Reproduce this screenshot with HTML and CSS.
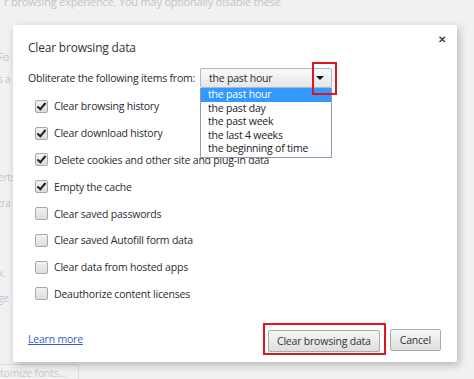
FILE: index.html
```html
<!DOCTYPE html>
<html lang="en">
  <head>
    <meta charset="UTF-8" />
    <title>Clear browsing data</title>
    <link rel="stylesheet" href="styles.css">
  </head>
  <body>
    <div class="page">
      <p class="page-top">r browsing experience. You may optionally disable these</p>
      <div class="page-side">
        <span style="top:52px">Fo</span>
        <span style="top:74px">s a</span>
        <span style="top:172px">erts</span>
        <span style="top:198px">tra</span>
        <span style="top:268px">k.</span>
        <span class="blue" style="top:293px">ge</span>
      </div>
      <div class="page-btn">tomize fonts...</div>
    </div>

    <div class="dialog">
      <div class="dialog-head">
        <h1>Clear browsing data</h1>
        <span class="close">&#x2715;</span>
      </div>

      <div class="period">
        <label>Obliterate the following items from:</label>
        <div class="select">
          <div class="select-box">
            <span>the past hour</span>
            <span class="arrow"></span>
          </div>
          <ul class="options">
            <li class="active">the past hour</li>
            <li>the past day</li>
            <li>the past week</li>
            <li>the last 4 weeks</li>
            <li>the beginning of time</li>
          </ul>
          <div class="mark mark-arrow"></div>
        </div>
      </div>

      <div class="items">
        <div class="item"><span class="check on"></span>Clear browsing history</div>
        <div class="item"><span class="check on"></span>Clear download history</div>
        <div class="item"><span class="check on"></span>Delete cookies and other site and plug-in data</div>
        <div class="item"><span class="check on"></span>Empty the cache</div>
        <div class="item"><span class="check"></span>Clear saved passwords</div>
        <div class="item"><span class="check"></span>Clear saved Autofill form data</div>
        <div class="item"><span class="check"></span>Clear data from hosted apps</div>
        <div class="item"><span class="check"></span>Deauthorize content licenses</div>
      </div>

      <div class="dialog-foot">
        <a href="#">Learn more</a>
        <div class="buttons">
          <div class="mark-wrap"><button>Clear browsing data</button></div>
          <button class="cancel">Cancel</button>
        </div>
      </div>
    </div>
  </body>
</html>
```

FILE: styles.css
```css
body {
  margin: 0;
  width: 474px;
  height: 379px;
  overflow: hidden;
  background: #f1f1f1;
  font-family: "Open Sans", "Noto Sans", Arial, sans-serif;
  font-size: 10.5px;
  letter-spacing: -0.2px;
  color: #2b2b2b;
}

.page {
  position: relative;
  width: 474px;
  height: 379px;
  color: #c4c4c4;
}
.page-top {
  margin: 0;
  padding: 0 0 0 4px;
  line-height: 8px;
  font-size: 11px;
  margin-top: -2px;
  white-space: nowrap;
}
.page-side span {
  position: absolute;
  left: -2px;
  font-size: 10px;
}
.page-side .blue {
  color: #b8c2d8;
}
.page-btn {
  position: absolute;
  left: -3px;
  top: 366px;
  width: 78px;
  height: 18px;
  border: 1px solid #ddd;
  line-height: 16px;
  padding-left: 2px;
  font-size: 10.5px;
  color: #c8c8c8;
  white-space: nowrap;
}

.dialog {
  position: absolute;
  left: 13px;
  top: 25px;
  width: 444px;
  height: 337px;
  box-sizing: border-box;
  background: #fff;
  border-radius: 2px;
  box-shadow: 2px 3px 8px rgba(0, 0, 0, 0.25);
  padding: 0 15px 0 15px;
  display: flex;
  flex-direction: column;
}

.dialog-head {
  display: flex;
  justify-content: space-between;
  align-items: center;
  height: 40px;
}
.dialog-head h1 {
  margin: 4px 0 0 0;
  font-size: 12px;
  font-weight: normal;
  color: #333;
}
.close {
  font-size: 10px;
  color: #444;
  font-weight: bold;
  margin-right: -4px;
  margin-top: -13px;
}

.period {
  display: flex;
  align-items: center;
  height: 24px;
  margin-top: 1px;
  white-space: nowrap;
}
.period label {
  width: 172px;
}
.select {
  position: relative;
  width: 132px;
  height: 20px;
}
.select-box {
  box-sizing: border-box;
  height: 20px;
  border: 1px solid #a9b8cf;
  border-radius: 2px;
  background: linear-gradient(#fafafa, #e6e6e6);
  display: flex;
  align-items: center;
  justify-content: space-between;
  padding: 0 6px 0 8px;
}
.arrow {
  width: 0;
  height: 0;
  border-left: 4px solid transparent;
  border-right: 4px solid transparent;
  border-top: 4px solid #111;
  margin-right: 1px;
}
.options {
  position: absolute;
  left: 0;
  top: 20px;
  width: 132px;
  box-sizing: border-box;
  margin: 0;
  padding: 0 0 1px 0;
  list-style: none;
  background: #fff;
  border: 1px solid #8a9ab3;
  border-top: none;
  z-index: 2;
}
.options li {
  height: 13.5px;
  line-height: 13px;
  padding-left: 7px;
  color: #222;
}
.options li.active {
  background: #3399ff;
  color: #fff;
}
.mark {
  position: absolute;
  border: 2px solid #e0141e;
  box-sizing: border-box;
  z-index: 3;
}
.mark-arrow {
  left: 112px;
  top: -6px;
  width: 25px;
  height: 33px;
}

.items {
  margin-top: 3px;
}
.item {
  display: flex;
  align-items: center;
  height: 26.8px;
  padding-left: 7px;
  white-space: nowrap;
}
.check {
  box-sizing: border-box;
  width: 13px;
  height: 13px;
  border: 1px solid #a8a8a8;
  border-radius: 2px;
  background: linear-gradient(#f2f2f2, #dcdcdc);
  margin-right: 6px;
  position: relative;
}
.check.on::after {
  content: "";
  position: absolute;
  left: 3px;
  top: 0px;
  width: 3px;
  height: 7px;
  border: solid #222;
  border-width: 0 2px 2px 0;
  transform: rotate(40deg);
}

.dialog-foot {
  margin-top: auto;
  height: 42px;
  display: flex;
  align-items: center;
  justify-content: space-between;
  padding-bottom: 8px;
}
.dialog-foot a {
  color: #3a5bc7;
  text-decoration: underline;
  margin-top: 12px;
}
.buttons {
  display: flex;
  align-items: center;
  gap: 4px;
  margin-top: 12px;
  margin-right: 1px;
}
.mark-wrap {
  border: 2px solid #e0141e;
  padding: 5px 4px 1px 3px;
}
button {
  font-family: inherit;
  font-size: 10.5px;
  letter-spacing: -0.2px;
  color: #333;
  height: 22px;
  border: 1px solid #aaa;
  border-radius: 2px;
  background: linear-gradient(#f6f6f6, #dedede);
  padding: 0 8px;
}
.buttons > .cancel {
  margin-top: 2px;
  padding: 0 9px;
}
```
